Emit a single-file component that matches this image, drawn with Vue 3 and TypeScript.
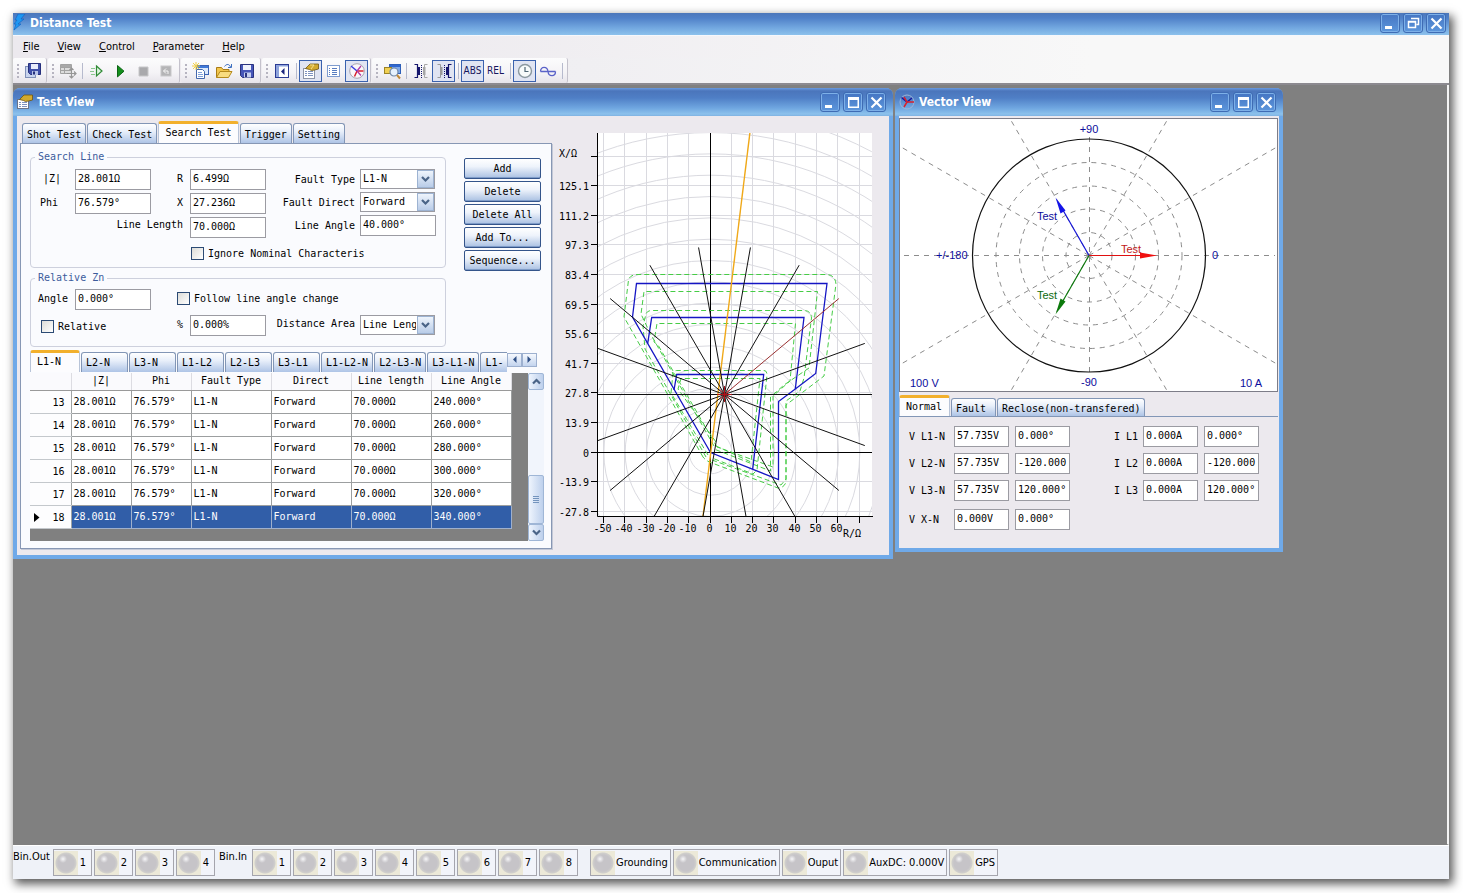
<script setup lang="ts">
import { ref } from 'vue'

type Item = { icon?: string; text?: string; on?: boolean; sep?: boolean; label?: string }

const menus: string[] = ['File', 'View', 'Control', 'Parameter', 'Help']

const toolGroups: Item[][] = [
  [{ icon: 'saveall', label: 'Save report' }],
  [
    { icon: 'tablemove', label: 'Move table' },
    { sep: true },
    { icon: 'runstep', label: 'Run selected' },
    { icon: 'play', label: 'Start' },
    { icon: 'stop', label: 'Stop' },
    { icon: 'undo', label: 'Reset' },
  ],
  [
    { icon: 'newfile', label: 'New' },
    { icon: 'open', label: 'Open' },
    { icon: 'save', label: 'Save' },
  ],
  [
    { icon: 'panel', label: 'Panel' },
    { sep: true },
    { icon: 'props', on: true, label: 'Test view' },
    { icon: 'list', label: 'Report view' },
    { icon: 'vector', on: true, label: 'Vector view' },
  ],
  [
    { icon: 'find', label: 'Find' },
    { sep: true },
    { icon: 'bracketL', label: 'Left state' },
    { icon: 'bracketR', on: true, label: 'Right state' },
    { sep: true },
    { text: 'ABS', on: true },
    { text: 'REL' },
    { sep: true },
    { icon: 'clock', on: true, label: 'Clock' },
    { icon: 'sine', label: 'Wave' },
    { sep: true },
  ],
]

const mainTabs: string[] = ['Shot Test', 'Check Test', 'Search Test', 'Trigger', 'Setting']
const mainTab = ref('Search Test')
const loopTabs: string[] = ['L1-N', 'L2-N', 'L3-N', 'L1-L2', 'L2-L3', 'L3-L1', 'L1-L2-N', 'L2-L3-N', 'L3-L1-N', 'L1-']
const loopTab = ref('L1-N')
const stateTabs: string[] = ['Normal', 'Fault', 'Reclose(non-transfered)']
const stateTab = ref('Normal')
const actions: string[] = ['Add', 'Delete', 'Delete All', 'Add To...', 'Sequence...']

const columns: string[] = ['|Z|', 'Phi', 'Fault Type', 'Direct', 'Line length', 'Line Angle']
const rows = [13, 14, 15, 16, 17, 18].map((n) => ({
  n,
  cells: ['28.001Ω', '76.579°', 'L1-N', 'Forward', '70.000Ω', `${(n - 1) * 20}.000°`],
}))
const current = ref(18)

const volts = [
  { name: 'V L1-N', a: '57.735V', b: '0.000°' },
  { name: 'V L2-N', a: '57.735V', b: '-120.000' },
  { name: 'V L3-N', a: '57.735V', b: '120.000°' },
  { name: 'V X-N', a: '0.000V', b: '0.000°' },
]
const amps = [
  { name: 'I L1', a: '0.000A', b: '0.000°' },
  { name: 'I L2', a: '0.000A', b: '-120.000' },
  { name: 'I L3', a: '0.000A', b: '120.000°' },
]

const outs = [1, 2, 3, 4]
const ins = [1, 2, 3, 4, 5, 6, 7, 8]
const lamps: string[] = ['Grounding', 'Communication', 'Ouput', 'AuxDC: 0.000V', 'GPS']

/* impedance plane */
const ox = 710.5
const oy = 452.5
const step = 21.33
const xTicks = Array.from({ length: 13 }, (_, i) => ({ v: (i - 5) * 10, x: Math.round(ox + (i - 5) * step) - 0.5 }))
const yTicks = Array.from({ length: 13 }, (_, i) => {
  const v = (i - 2) * 13.9
  return { v: i === 2 ? '0' : v.toFixed(1), y: Math.round(oy - (i - 2) * 29.6) - 0.5 }
})
const rings = Array.from({ length: 16 }, (_, i) => (i + 1) * step)
const cx = 724.5
const cy = 394.5
const rays = Array.from({ length: 18 }, (_, i) => {
  const a = (i * 20 * Math.PI) / 180
  return { deg: i * 20, x: cx + 149.3 * Math.cos(a), y: cy - 149.3 * Math.sin(a) }
})

/* phasor plane */
const vRings = [23, 46.5, 69.5, 93]
const spokes = [30, 60, 120, 150, 210, 240, 300, 330].map((d) => {
  const a = (d * Math.PI) / 180
  const k = Math.min(188 / Math.abs(Math.cos(a)), 136 / Math.abs(Math.sin(a)))
  return { x: 1089 + k * Math.cos(a), y: 255.5 - k * Math.sin(a) }
})
</script>

<template>
  <div class="page">
    <main class="frame">
      <header class="titlebar app-title">
        <svg class="ticon" width="14" height="17" viewBox="0 0 14 17"><path d="M5 0 12 0 8 5 11 5 5 10 8 10 1 16 3 10 1 10 4 6 2 6Z" fill="#1f97f2" stroke="#0e5fc0" stroke-width=".6" /></svg>
        <h1>Distance Test</h1>
        <span class="winbtns">
          <button type="button" aria-label="Minimize"><svg width="19" height="19" viewBox="0 0 19 19"><path d="M4 12h7v3H4z" fill="#fff" /></svg></button>
          <button type="button" aria-label="Restore"><svg width="19" height="19" viewBox="0 0 19 19"><path d="M7.500 4.500h7v6h-2M4.500 7.500h7v6h-7z M4 8h8M7 4.500h8" fill="none" stroke="#fff" stroke-width="1.500" /></svg></button>
          <button type="button" aria-label="Close"><svg width="19" height="19" viewBox="0 0 19 19"><path d="M4.500 4.500l10 10M14.500 4.500l-10 10" stroke="#fff" stroke-width="2.200" /></svg></button>
        </span>
      </header>

      <nav class="menubar">
        <button v-for="m in menus" :key="m" type="button"><u>{{ m[0] }}</u>{{ m.slice(1) }}</button>
      </nav>

      <div class="toolbar">
        <div v-for="(g, gi) in toolGroups" :key="gi" class="tgroup">
          <i class="grip"></i>
          <template v-for="(t, ti) in g" :key="ti">
            <i v-if="t.sep" class="tsep"></i>
            <button v-else type="button" :class="{ on: t.on }" :aria-label="t.label">
              <template v-if="t.text">{{ t.text }}</template>
              <svg v-else width="18" height="18" viewBox="0 0 18 18">
                <g v-if="t.icon === 'saveall'">
                  <rect x="1.500" y="4.500" width="10" height="11" fill="#c9d4ee" stroke="#8090b8" />
                  <path d="M4.500 1.500h12v11h-10l-2-2z" fill="#3f4fa8" stroke="#26307c" /><rect x="7" y="2" width="7" height="5" fill="#e8ecfa" /><rect x="8" y="9" width="6" height="4" fill="#b8c4e8" /><path d="M9 9.500h2v3H9z" fill="#26307c" />
                </g>
                <g v-else-if="t.icon === 'tablemove'">
                  <path d="M1.500 2.500h11v9h-11zM1.500 5.500h11M1.500 8.500h11M5.500 2.500v9" fill="#dcdcdc" stroke="#a2a2a2" /><path d="M2 3h10v2H2z" fill="#a8a8a8" /><path d="M12.500 6v10M8 11.500h9M10.500 8l2-2 2 2M10.500 14l2 2 2-2M15 9.500l2 2-2 2" fill="none" stroke="#969696" stroke-width="1.200" />
                </g>
                <g v-else-if="t.icon === 'runstep'">
                  <path d="M8.500 4l5.500 5-5.500 5z" fill="#dff5df" stroke="#2f8a35" stroke-width="1.200" /><path d="M3 6.500h4M2 9.500h4M3 12.500h4" stroke="#8cc68f" />
                </g>
                <path v-else-if="t.icon === 'play'" d="M6.500 3.500l6.500 5.700-6.500 5.700z" fill="#138f1c" stroke="#0c6414" />
                <path v-else-if="t.icon === 'stop'" d="M5 5h9v9H5z" fill="#a9a9ac" stroke="#c6c6c8" />
                <g v-else-if="t.icon === 'undo'"><rect x="4" y="4" width="10" height="10" fill="#b4b4b6" stroke="#c8c8ca" /><path d="M6.500 9h4.500v3M6.500 9l2.500-2.500M6.500 9l2.500 2.500" stroke="#f4f4f4" fill="none" /></g>
                <g v-else-if="t.icon === 'newfile'">
                  <rect x="4.500" y="3.500" width="12" height="9" fill="#dbe8fb" stroke="#3a62b5" /><path d="M5 4h11v2H5z" fill="#3f78d8" /><path d="M4.500 7.500h6l2 2v7h-8z" fill="#fff" stroke="#4468ad" /><path d="M6 10.500h4M6 12.500h5M6 14.500h5" stroke="#7e9fda" /><path d="M4 0v8M0 4h8M1 1l6 6M7 1L1 7" stroke="#f2cf46" />
                </g>
                <g v-else-if="t.icon === 'open'">
                  <path d="M1.500 15.500v-10h5l1.500 2h6v2.500" fill="#f3c64c" stroke="#a97b15" /><path d="M1.500 15.500l3.500-6h12l-3.500 6z" fill="#f9dc80" stroke="#b58a1c" /><path d="M9.500 4.500c2-3 5-2.500 6 .5M16.500 2v3.500H13" fill="none" stroke="#3c6fc0" />
                </g>
                <g v-else-if="t.icon === 'save'">
                  <path d="M2.500 2.500h13v13h-11l-2-2z" fill="#4656b8" stroke="#29327f" /><rect x="5" y="3" width="8" height="5" fill="#eef1fb" /><rect x="6" y="10.500" width="7" height="5" fill="#c6cfee" /><path d="M7 11h2v4H7z" fill="#29327f" />
                </g>
                <g v-else-if="t.icon === 'panel'"><rect x="2.500" y="2.500" width="13" height="13" fill="#fff" stroke="#2b3b94" /><path d="M3 3h12v1.500H3zM3 3h3v12H3z" fill="#8fa4dc" /><path d="M11.500 6v7L8 9.500z" fill="#19237c" /></g>
                <g v-else-if="t.icon === 'props'">
                  <rect x="1.500" y="6.500" width="11" height="10" fill="#fff" stroke="#8c94a8" /><path d="M3 9.500h2M6 9.500h5M3 11.500h2M6 11.500h5M3 13.500h2M6 13.500h5" stroke="#7f93c0" /><path d="M3.500 6.500L8 2h8.500v5l-4 1-3 .5-2-1z" fill="#d2a92f" stroke="#6e5510" stroke-width=".8" /><path d="M8 3l4 0-3 4" fill="none" stroke="#f6e08a" />
                </g>
                <g v-else-if="t.icon === 'list'"><rect x="2.500" y="3.500" width="12" height="11" fill="#fff" stroke="#7f9ccf" /><path d="M4 6.500h1M7 6.500h5M4 8.500h1M7 8.500h5M4 10.500h1M7 10.500h5M4 12.500h1M7 12.500h5" stroke="#587cc0" /></g>
                <g v-else-if="t.icon === 'vector'"><circle cx="9" cy="9" r="7.300" fill="#fbf7fa" stroke="#a9a6b2" /><path d="M3 4l6 5" stroke="#3a3fe0" stroke-width="1.500" /><path d="M9 9h6.500M9 9l-2.500 5.500" stroke="#d8202c" stroke-width="1.500" /><path d="M9 9l4-5M9 9l4 4.500" stroke="#b03aa8" stroke-width="1.300" /></g>
                <g v-else-if="t.icon === 'find'"><rect x="6.500" y="2.500" width="11" height="9" fill="#7fa9ea" stroke="#2e5fb8" /><path d="M7 3h10v2H7z" fill="#2f66cf" /><rect x="1.500" y="5.500" width="7" height="6" fill="#f1d052" stroke="#9d8426" /><circle cx="11" cy="10" r="4" fill="#e6f1fd" stroke="#6f86a8" stroke-width="1.200" /><path d="M14 13l3 3.500" stroke="#c08a3a" stroke-width="2" /></g>
                <g v-else-if="t.icon === 'bracketL'"><path d="M2.500 2.500h3v13h-3" fill="none" stroke="#15156c" stroke-width="1.200" /><path d="M5 5h3v8H5z" fill="#15156c" /><path d="M9.500 3v13" stroke="#15156c" stroke-dasharray="1 1" /><path d="M15.500 2.500h-3v13h3" fill="none" stroke="#a7a7a7" /><path d="M11 5h2.500v8H11z" fill="#a7a7a7" /></g>
                <g v-else-if="t.icon === 'bracketR'"><path d="M2.500 2.500h3v13h-3" fill="none" stroke="#9a9a9a" /><path d="M5 5h2.500v8H5z" fill="#9a9a9a" /><path d="M9.500 3v13" stroke="#15156c" stroke-dasharray="1 1" /><path d="M16.500 2.500h-3v13h3" fill="none" stroke="#15156c" stroke-width="1.200" /><path d="M11 5h3v8h-3z" fill="#15156c" /></g>
                <g v-else-if="t.icon === 'clock'"><circle cx="9" cy="9" r="6.500" fill="#f7fafa" stroke="#8b989f" stroke-width="1.400" /><path d="M9 5v4.500h3.500" fill="none" stroke="#4f6674" stroke-width="1.200" /></g>
                <path v-else-if="t.icon === 'sine'" d="M1.500 9.500h15M1.500 9.500C1.500 4 8.500 4 9 9.500S16.500 15 16.500 9.500" fill="none" stroke="#5a62c8" stroke-width="1.300" />
              </svg>
            </button>
          </template>
        </div>
      </div>

      <section class="desk">
        <article class="win test-win">
          <header class="titlebar">
            <svg class="ticon" width="18" height="18" viewBox="0 0 18 18"><rect x="1.500" y="6.500" width="11" height="9" fill="#fff" stroke="#6b7388" /><path d="M3 9.500h2M6 9.500h5M3 11.500h2M6 11.500h5M3 13.500h2M6 13.500h5" stroke="#7f93c0" /><path d="M3.500 6.500L8 2h8.500v5l-4 1-3 .5-2-1z" fill="#d2a92f" stroke="#6e5510" stroke-width=".8" /></svg>
            <h2>Test View</h2>
            <span class="winbtns">
              <button type="button" aria-label="Minimize"><svg width="19" height="19" viewBox="0 0 19 19"><path d="M4 12h7v3H4z" fill="#fff" /></svg></button>
              <button type="button" aria-label="Maximize"><svg width="19" height="19" viewBox="0 0 19 19"><path d="M4 4h11v11H4zM5.500 7v6.500h8V7z" fill="#fff" fill-rule="evenodd" /></svg></button>
              <button type="button" aria-label="Close"><svg width="19" height="19" viewBox="0 0 19 19"><path d="M4.500 4.500l10 10M14.500 4.500l-10 10" stroke="#fff" stroke-width="2.200" /></svg></button>
            </span>
          </header>
          <div class="wbody test-body">
            <div class="pane">
              <div class="tabs main-tabs" role="tablist">
                <button v-for="t in mainTabs" :key="t" type="button" role="tab" :aria-selected="t === mainTab" :class="{ sel: t === mainTab }" @click="mainTab = t">{{ t }}</button>
              </div>
              <div class="page-box">
                <div class="upper">
                  <div class="groups">
                    <fieldset>
                      <legend>Search Line</legend>
                      <div class="sl">
                        <div class="grid-a">
                          <label for="z" class="mid">|Z|</label><input id="z" value="28.001Ω" />
                          <label for="r" class="end">R</label><input id="r" value="6.499Ω" />
                          <label for="phi">Phi</label><input id="phi" value="76.579°" />
                          <label for="x" class="end">X</label><input id="x" value="27.236Ω" />
                          <label for="len" class="end span3">Line Length</label><input id="len" value="70.000Ω" />
                        </div>
                        <div class="grid-b">
                          <label for="ft">Fault Type</label>
                          <span class="drop"><select id="ft"><option>L1-N</option></select><i><svg width="9" height="7" viewBox="0 0 9 7"><path d="M1 1l3.500 3.500L8 1" fill="none" stroke="#4a6487" stroke-width="2.200" /></svg></i></span>
                          <label for="fd">Fault Direct</label>
                          <span class="drop"><select id="fd"><option>Forward</option></select><i><svg width="9" height="7" viewBox="0 0 9 7"><path d="M1 1l3.500 3.500L8 1" fill="none" stroke="#4a6487" stroke-width="2.200" /></svg></i></span>
                          <label for="la">Line Angle</label><input id="la" value="40.000°" />
                        </div>
                      </div>
                      <label class="check ignore"><input type="checkbox" />Ignore Nominal Characteris</label>
                    </fieldset>
                    <fieldset class="rel">
                      <legend>Relative Zn</legend>
                      <div class="grid-r">
                        <label for="ang">Angle</label><input id="ang" value="0.000°" />
                        <label class="check follow"><input type="checkbox" />Follow line angle change</label>
                        <label class="check relchk"><input type="checkbox" />Relative</label>
                        <label for="pct" class="end">%</label><input id="pct" value="0.000%" />
                        <label for="da" class="end2">Distance Area</label>
                        <span class="drop"><select id="da"><option>Line Length</option></select><i><svg width="9" height="7" viewBox="0 0 9 7"><path d="M1 1l3.500 3.500L8 1" fill="none" stroke="#4a6487" stroke-width="2.200" /></svg></i></span>
                      </div>
                    </fieldset>
                  </div>
                  <div class="actions"><button v-for="a in actions" :key="a" type="button">{{ a }}</button></div>
                </div>

                <div class="loop-row">
                  <div class="tabs loop-tabs" role="tablist">
                    <button v-for="t in loopTabs" :key="t" type="button" role="tab" :aria-selected="t === loopTab" :class="{ sel: t === loopTab }" @click="loopTab = t">{{ t }}</button>
                  </div>
                  <button type="button" class="arrow" aria-label="Scroll left"><svg width="5" height="7" viewBox="0 0 5 7"><path d="M4.500 0v7L1 3.500z" fill="#2f4f85" /></svg></button>
                  <button type="button" class="arrow" aria-label="Scroll right"><svg width="5" height="7" viewBox="0 0 5 7"><path d="M.5 0v7L4 3.500z" fill="#2f4f85" /></svg></button>
                </div>
                <div class="tablebox">
                  <div class="tarea">
                    <table>
                      <colgroup><col class="c0" /><col class="c1" /><col class="c1" /><col class="c2" /><col class="c2" /><col class="c2" /><col class="c2" /></colgroup>
                      <thead><tr><th></th><th v-for="c in columns" :key="c">{{ c }}</th></tr></thead>
                      <tbody>
                        <tr v-for="r in rows" :key="r.n" :class="{ cur: r.n === current }" @click="current = r.n">
                          <th scope="row"><svg v-if="r.n === current" width="6" height="9" viewBox="0 0 6 9"><path d="M0 0l5.500 4.500L0 9z" /></svg>{{ r.n }}</th>
                          <td v-for="(c, ci) in r.cells" :key="ci">{{ c }}</td>
                        </tr>
                      </tbody>
                    </table>
                  </div>
                  <div class="scroll">
                    <button type="button" aria-label="Scroll up"><svg width="9" height="7" viewBox="0 0 9 7"><path d="M1 5.500L4.500 2 8 5.500" fill="none" stroke="#4a6487" stroke-width="2.200" /></svg></button>
                    <span class="thumb"><svg width="6" height="8" viewBox="0 0 6 8"><path d="M0 .5h6M0 2.500h6M0 4.500h6M0 6.500h6" stroke="#7394bd" /></svg></span>
                    <button type="button" aria-label="Scroll down"><svg width="9" height="7" viewBox="0 0 9 7"><path d="M1 1.500L4.500 5 8 1.500" fill="none" stroke="#4a6487" stroke-width="2.200" /></svg></button>
                  </div>
                </div>
              </div>
            </div>

            <svg class="chart" viewBox="552 116 337 439">
              <defs><clipPath id="plot"><rect x="597" y="133" width="275" height="383" /></clipPath></defs>
              <rect x="597" y="133" width="275" height="383" fill="#fff" />
              <g clip-path="url(#plot)" fill="none">
                <g stroke="#dadae0">
                  <circle v-for="r in rings" :key="r" :cx="ox" :cy="oy" :r="r" />
                  <path v-for="t in xTicks" :key="'gx' + t.v" :d="`M${t.x} 133V516`" />
                  <path v-for="t in yTicks" :key="'gy' + t.v" :d="`M597 ${t.y}H872`" />
                </g>
                <path d="M710.500 133V516M597 452.500H872" stroke="#000" />
                <g stroke="#46cc46" stroke-dasharray="5 3">
                  <path d="M703 457L624 317 628.500 280Q630 274.500 638 274.500H826Q835 274.500 836 284L824 376 786 405V482Q784 488 778 488L712 463Q706 461 703 457" />
                  <path d="M714 446L650 333 641 314 644 291.500H817.500L809 368 784 385 770.500 397V471L714 449" />
                  <path d="M706 457L645 349 643 326 646 314Q647 310.500 652 310.500H804Q811 310.500 811.500 318L804 378 800 391 786 401V479L781 485 712 460" />
                  <path d="M717 447L658 345 654 342 657 323.500H795.500L790 381 773 396V467L717 447" />
                  <path d="M708 455L671 393 673 373Q674 370.500 677 370.500H764Q767 370.500 767 375L757 470 753 474 712 458" />
                  <path d="M716 442L678 389 681 378.500H760L751 462 716 446" />
                </g>
                <g stroke="#1515c4" stroke-width="1.300">
                  <path d="M710.500 452.500L632.500 317 636.500 283.500H827L815.700 373.500 795.300 389 778.500 401.500V479.500Z" />
                  <path d="M647.700 343.300L651.700 317.500H804L795.300 389" />
                  <path d="M674 390L676.700 374.500H763.700L752.700 469" />
                </g>
                <path d="M750 132L703 516" stroke="#f0a818" stroke-width="1.400" />
                <path v-for="r in rays" :key="r.deg" :d="`M${cx} ${cy}L${r.x} ${r.y}`" :stroke="r.deg === 40 ? '#993030' : '#111'" />
                <path d="M724.500 386v16M717 394.500h15M720 389.500l10 10M730 389.500l-10 10" stroke="#b01018" />
              </g>
              <path d="M597.500 133V516.500H873" fill="none" stroke="#000" />
              <g stroke="#000">
                <path v-for="t in xTicks" :key="'tx' + t.v" :d="`M${t.x} 516v7`" />
                <path v-for="t in yTicks" :key="'ty' + t.v" :d="`M591 ${t.y}h7`" />
              </g>
              <g class="axis">
                <text v-for="t in yTicks.slice(0, 12)" :key="'ly' + t.v" x="589" :y="t.y + 4" text-anchor="end">{{ t.v }}</text>
                <text v-for="t in xTicks.slice(0, 12)" :key="'lx' + t.v" :x="t.x - 1" y="532" text-anchor="middle">{{ t.v }}</text>
                <text x="559" y="157">X/Ω</text>
                <text x="843" y="537">R/Ω</text>
              </g>
            </svg>
          </div>
        </article>

        <article class="win vec-win">
          <header class="titlebar">
            <svg class="ticon" width="18" height="18" viewBox="0 0 18 18"><circle cx="9" cy="9" r="7" fill="none" stroke="#9db4d8" /><path d="M3.500 4.500L9 9l5-4" fill="none" stroke="#17179c" stroke-width="1.500" /><path d="M9 9h7M9 9l-3 5M6 4l3 5" stroke="#d8202c" stroke-width="1.500" /></svg>
            <h2>Vector View</h2>
            <span class="winbtns">
              <button type="button" aria-label="Minimize"><svg width="19" height="19" viewBox="0 0 19 19"><path d="M4 12h7v3H4z" fill="#fff" /></svg></button>
              <button type="button" aria-label="Maximize"><svg width="19" height="19" viewBox="0 0 19 19"><path d="M4 4h11v11H4zM5.500 7v6.500h8V7z" fill="#fff" fill-rule="evenodd" /></svg></button>
              <button type="button" aria-label="Close"><svg width="19" height="19" viewBox="0 0 19 19"><path d="M4.500 4.500l10 10M14.500 4.500l-10 10" stroke="#fff" stroke-width="2.200" /></svg></button>
            </span>
          </header>
          <div class="wbody vec-body">
            <svg class="vec" viewBox="899 118 379 274">
              <rect x="899.500" y="118.500" width="378" height="273" fill="#fff" stroke="#7d7d88" />
              <g fill="none" stroke="#8c8c8c" stroke-dasharray="5 5">
                <circle v-for="r in vRings" :key="r" cx="1089" cy="255.500" :r="r" />
                <path v-for="(s, i) in spokes" :key="i" :d="`M1089 255.500L${s.x} ${s.y}`" />
                <path d="M904 255.500H1275M1089.500 137V376" />
              </g>
              <circle cx="1089" cy="255.500" r="116.500" fill="none" stroke="#111" stroke-width="1.200" />
              <path d="M1089 255.500H1145" stroke="#e01010" stroke-width="1.200" /><path d="M1157 255.500l-17-3v6z" fill="#f01010" />
              <path d="M1089 255.500L1060 205" stroke="#1414d8" stroke-width="1.200" /><path d="M1055.500 197.500l5 16 5-3z" fill="#1414e8" />
              <path d="M1089 255.500L1060 306" stroke="#0c7a0c" stroke-width="1.200" /><path d="M1055.500 314.500l5-16 5 3z" fill="#0c7a0c" />
              <g class="vt">
                <text x="1037" y="220">Test</text><text x="1121" y="253" class="red">Test</text><text x="1037" y="299" class="green">Test</text>
                <text x="1089" y="133" text-anchor="middle">+90</text><text x="1089" y="386" text-anchor="middle">-90</text>
                <text x="936" y="259">+/-180</text><text x="1212" y="259">0</text>
                <text x="910" y="387">100 V</text><text x="1240" y="387">10 A</text>
              </g>
            </svg>
            <div class="tabs state-tabs" role="tablist">
              <button v-for="t in stateTabs" :key="t" type="button" role="tab" :aria-selected="t === stateTab" :class="{ sel: t === stateTab }" @click="stateTab = t">{{ t }}</button>
            </div>
            <div class="phasors">
              <div class="pcol">
                <div v-for="v in volts" :key="v.name" class="prow"><label :for="v.name">{{ v.name }}</label><input :id="v.name" :value="v.a" /><input :aria-label="v.name + ' angle'" :value="v.b" /></div>
              </div>
              <div class="pcol amps">
                <div v-for="v in amps" :key="v.name" class="prow"><label :for="v.name">{{ v.name }}</label><input :id="v.name" :value="v.a" /><input :aria-label="v.name + ' angle'" :value="v.b" /></div>
              </div>
            </div>
          </div>
        </article>
      </section>

      <footer class="status">
        <span class="cap">Bin.Out</span>
        <span v-for="n in outs" :key="'o' + n" class="cell"><i class="led"></i>{{ n }}</span>
        <span class="cap in">Bin.In</span>
        <span v-for="n in ins" :key="'i' + n" class="cell"><i class="led"></i>{{ n }}</span>
        <span class="gap"></span>
        <span v-for="l in lamps" :key="l" class="cell wide"><i class="led"></i>{{ l }}</span>
      </footer>
    </main>
  </div>
</template>

<style>
html, body { margin: 0; background: #fff; }
</style>

<style scoped>
* { box-sizing: border-box; }
.page { min-height: 100vh; padding: 13px 14px 14px 13px; display: flex; font: 11px/14px "DejaVu Sans Condensed", "DejaVu Sans", sans-serif; color: #000; overflow: hidden; }
.frame { flex: 1; min-width: 0; display: flex; flex-direction: column; box-shadow: 3px 4px 9px 1px rgba(0, 0, 0, .65); background: #ece9ee; }
button, input, select { font: inherit; color: inherit; margin: 0; }
svg { display: block; }
.titlebar { display: flex; align-items: center; height: 28px; padding: 0 7px 0 3px; background: linear-gradient(#6a9be0 0, #4b75bb 3px, #4f7fc6 10px, #6fa6e0 20px, #8cc1ec 26px, #7fb2e2 100%); color: #fff; }
.titlebar h1, .titlebar h2 { flex: 1; margin: 0; font: bold 12px/16px "DejaVu Sans Condensed", "DejaVu Sans", sans-serif; }
.ticon { margin-right: 3px; }
.app-title { height: 22px; padding: 0 3px 3px 0; background: linear-gradient(#4c77ba 0, #4f80c8 5px, #73a8e0 15px, #8cc1ec 100%); overflow: hidden; }
.winbtns { display: flex; gap: 3px; }
.winbtns button { width: 20px; height: 20px; padding: 0; border: 1px solid #3f6cb4; border-radius: 3px; background: linear-gradient(#4575c2, #5c96dc); box-shadow: inset 0 0 0 1px #7db0e8; display: grid; place-items: center; }
.menubar { display: flex; gap: 18px; height: 23px; padding: 0 10px; align-items: center; background: linear-gradient(90deg, #ece9ee 0, #ece9ee 20%, #f8f8f8 75%); border-top: 1px solid #f6f8fc; }
.menubar button { border: 0; padding: 0; background: none; }
.toolbar { display: flex; gap: 2px; height: 27px; align-items: stretch; border-bottom: 2px solid #8c8a90; background: linear-gradient(90deg, #ece9ee 0, #f0eff2 40%, #f8f8f8 75%); }
.tgroup { display: flex; align-items: center; padding: 0 2px; background: linear-gradient(#fcfcfd, #f4f3f6 60%, #e6e4ea); border-right: 1px solid #c4c2cc; border-radius: 2px; }
.tgroup + .tgroup { margin-left: -1px; }
.grip { width: 2px; height: 14px; margin: 0 2px; background: repeating-linear-gradient(#b6b4c0 0 2px, transparent 2px 4px); }
.tsep { width: 1px; height: 16px; margin: 0 2px 0 3px; background: #b6bacd; }
.tgroup button { width: 23px; height: 22px; padding: 0; border: 1px solid transparent; background: none; display: grid; place-items: center; font: 10px/12px "DejaVu Sans Condensed", "DejaVu Sans", sans-serif; color: #16165e; }
.tgroup button.on { border-color: #3a62ae; background: #e0e4f2; }
.desk { flex: 1; position: relative; background: #808080; border-right: 2px solid #f4f4f4; border-bottom: 1px solid #808080; }
.win { position: absolute; top: 3px; border: 4px solid #6fa9e8; border-top: 0; border-radius: 7px 7px 0 0; background: #5b93dc; }
.win .titlebar { margin: 0 -4px; border-radius: 7px 7px 0 0; }
.test-win { left: 0; width: 880px; }
.vec-win { left: 882px; width: 388px; }
.wbody { background: #ece9ee; }
.test-body { display: flex; align-items: stretch; }
.pane { width: 535px; padding: 5px 0 6px 3px; display: flex; flex-direction: column; font: 10px/12px "DejaVu Sans Mono", "Liberation Mono", monospace; }
.chart { flex: 1; min-width: 0; }
.axis, .phasors, .state-tabs { font: 10px/12px "DejaVu Sans Mono", "Liberation Mono", monospace; }
.tabs { display: flex; align-items: flex-end; gap: 1px; }
.tabs button { flex: none; height: 20px; padding: 2px 4px 0; border: 1px solid #8296b6; border-bottom: 0; border-radius: 3px 3px 0 0; background: linear-gradient(#fff, #e8effa 40%, #aec4e6); text-align: left; }
.tabs .sel { height: 22px; padding: 0 6px 1px; border-top: 3px solid #f2b02c; background: #fcfcfe; border-right-color: #b8c4d8; border-left-color: #b8c4d8; }
.main-tabs { padding-left: 2px; }
.page-box { flex: 1; border: 1px solid #8797b4; box-shadow: 1px 1px 0 #c3c8d6; background: #fafbfe; padding: 7px 7px 7px 9px; display: flex; flex-direction: column; }
.upper { display: flex; gap: 18px; }
.groups { width: 416px; }
fieldset { margin: 0; padding: 6px 0 0 7px; border: 1px solid #cdd0dd; border-radius: 4px; height: 117px; min-width: 0; }
fieldset.rel { margin-top: 4px; padding-top: 5px; height: 75px; }
legend { padding: 0 3px; margin-left: -3px; color: #3c5c9c; line-height: 12px; }
input:not([type]), select { height: 21px; width: 76px; padding: 0 2px 2px; border: 1px solid #9b9ba2; background: #fff; border-radius: 0; outline: 0; }
.sl { display: flex; }
.grid-a { display: grid; grid-template-columns: 37px 76px 39px 76px; grid-auto-rows: 24px; }
.grid-a label { padding: 4px 0 0 2px; }
.grid-a .mid { padding-left: 5px; }
.grid-a .end, .grid-r .end { text-align: right; padding-right: 7px; }
.grid-a .span3 { grid-column: span 3; padding-top: 2px; }
.grid-b { display: grid; grid-template-columns: 94px 76px; grid-auto-rows: 23px; }
.grid-b label { text-align: right; padding: 5px 5px 0 0; }
.drop { position: relative; display: block; width: 75px; height: 20px; }
.drop select { appearance: none; width: 75px; height: 20px; padding-right: 18px; padding-left: 2px; padding-bottom: 0; }
.drop i { position: absolute; right: 1px; top: 1px; width: 17px; height: 18px; border: 1px solid #9db3d2; background: linear-gradient(#eef4fc, #b9cce8); display: grid; place-items: center; pointer-events: none; }
.check { display: flex; align-items: center; gap: 4px; height: 13px; }
.check input { appearance: none; width: 13px; height: 13px; border: 1px solid #2b4a74; background: linear-gradient(135deg, #dcdcd8, #fff); }
.ignore { margin: 6px 0 0 153px; }
.grid-r { display: grid; grid-template-columns: 37px 76px 39px 76px 94px 76px; grid-auto-rows: 26px; }
.grid-r > label { padding-top: 4px; }
.grid-r > .check { height: 19px; padding-top: 0; }
.follow { grid-column: span 4; padding-left: 26px; }
.grid-r > .relchk { grid-column: span 2; padding-left: 3px; height: 23px; }
.grid-r .end2 { text-align: right; padding: 3px 5px 0 0; }
.actions { display: flex; flex-direction: column; gap: 2px; padding-top: 7px; }
.actions button { width: 77px; height: 21px; padding: 0; border: 1px solid #34548a; border-radius: 2px; background: linear-gradient(#fff, #eef3fb 40%, #a9c0e2); box-shadow: inset 0 -1px 0 #7f9cc8; }
.loop-row { display: flex; align-items: center; margin-top: 3px; height: 22px; }
.loop-tabs { flex: 1; min-width: 0; overflow: hidden; height: 22px; }
.tabs.loop-tabs button { padding-top: 0; }
.loop-tabs button { min-width: 47px; }
.loop-tabs .sel { min-width: 50px; }
.tabs.loop-tabs button:last-child { flex: 1; min-width: 0; border-right: 0; border-top-right-radius: 0; padding-right: 0; }
.arrow { width: 15px; height: 14px; padding: 0; margin-bottom: 3px; border: 1px solid #9db0cf; background: linear-gradient(#f6f9fe, #c3d4ee); display: grid; place-items: center; }
.arrow:last-child { margin-right: 7px; }
.tablebox { display: flex; flex: 1; margin-top: 1px; }
.tarea { flex: 1; background: #808080; }
table { border-collapse: collapse; table-layout: fixed; width: 481px; background: #fff; }
.c0 { width: 41px; } .c1 { width: 60px; } .c2 { width: 80px; }
thead th { height: 17px; padding: 0; font-weight: normal; text-align: center; background: #fafafd; border-right: 1px solid #dcdce2; border-bottom: 1px solid #9a9a9a; }
tbody th { height: 23px; padding: 2px 6px 0 0; font-weight: normal; text-align: right; background: #fdfdfe; border: 1px solid #c4c8cc; border-right-color: #a0a4a4; border-left: 0; }
tbody th svg { float: left; margin: 1px 0 0 4px; }
td { height: 23px; padding: 0 0 0 2px; border: 1px solid #9c9fa0; white-space: nowrap; }
.cur td { background: #315ea8; color: #fff; border-color: #9fb0cc; }
.scroll { width: 16px; display: flex; flex-direction: column; background: #f1f5fc; }
.scroll button, .thumb { border: 1px solid #9fb6d6; border-radius: 2px; background: linear-gradient(90deg, #eef4fd, #bdd0ec); padding: 0; display: grid; place-items: center; }
.scroll button { height: 17px; width: 16px; flex: none; }
.thumb { margin-top: auto; height: 49px; }
.vec-body { padding: 2px 1px 0 0; }
.vec { width: 100%; }
.state-tabs { margin-top: 3px; border-bottom: 1px solid #8296b6; }
.state-tabs button { height: 18px; }
.state-tabs button:nth-child(2) { min-width: 45px; }
.state-tabs .sel { height: 21px; min-width: 51px; }
.phasors { display: flex; justify-content: space-between; padding: 9px 19px 12px 10px; }
.prow { display: flex; align-items: flex-start; gap: 6px; height: 27px; }
.prow:nth-child(4) { margin-top: 2px; }
.prow label { width: 39px; padding-top: 5px; white-space: nowrap; }
.amps label { width: 23px; }
.prow input:not([type]) { width: 55px; }
.vt { font: 11px "Liberation Sans", Arial, sans-serif; fill: #0c0c9c; }
.vt .red { fill: #c01818; } .vt .green { fill: #0c6a0c; }
.status { display: flex; gap: 2px; height: 34px; padding: 3px 0 3px; border-top: 1px solid #fff; background: #eff2f8; }
.cap { width: 38px; padding-top: 1px; white-space: nowrap; }
.cap.in { width: 31px; margin-left: 2px; }
.cell { display: flex; align-items: center; width: 39px; height: 27px; padding-right: 5px; border: 1px solid #a5a5ad; justify-content: space-between; background: #f2f4fa; white-space: nowrap; }
.gap { width: 8px; }
.wide { width: auto; gap: 1px; padding-right: 2px; }
.led { width: 24px; height: 24px; background: radial-gradient(circle at 9px 8px, #f6f6f8 0, rgba(246, 246, 248, 0) 4px), radial-gradient(circle at 12px 12px, #c6c4c8 0 8px, #d0cfcc 10px, #ece9d8 11px); }
</style>
